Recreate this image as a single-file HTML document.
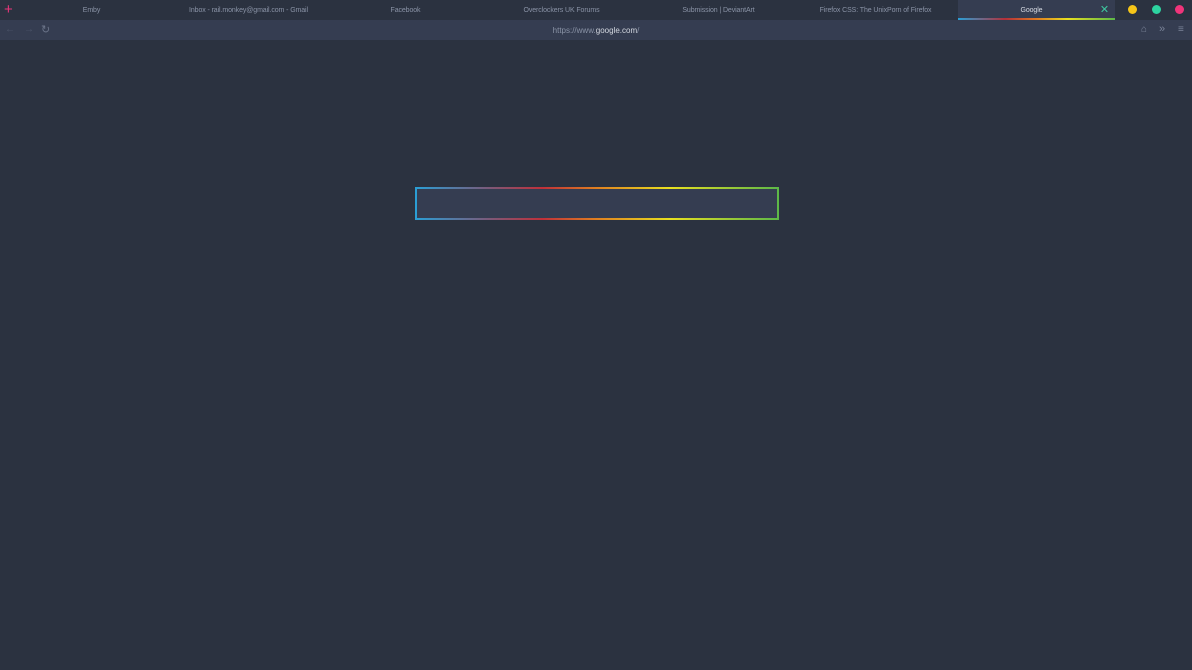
<!DOCTYPE html>
<html><head><meta charset="utf-8"><style>
*{margin:0;padding:0;box-sizing:border-box}
body{width:1192px;height:670px;background:#2b3240;font-family:"Liberation Sans",sans-serif;overflow:hidden;position:relative}
#tabs{position:absolute;left:0;top:0;width:1192px;height:20px;background:#2b3240}
.tab{position:absolute;top:0;height:20px;width:157px;color:#8a93a6;font-size:7px;text-align:center;line-height:22px;padding-right:10px;letter-spacing:-0.1px}
.tab.active{background:#353d51;color:#d4d8e0}
.tab.active:after{content:"";position:absolute;left:0;right:0;bottom:0;height:2px;background:linear-gradient(90deg,#2a9fd6,#b3303a 30%,#e07a20 50%,#e8e020 70%,#5cb848)}
#nav{position:absolute;left:0;top:20px;width:1192px;height:20px;background:#353d51}
.url{position:absolute;left:0;width:1192px;top:0;line-height:21px;text-align:center;font-size:8px;color:#8a93a6}
.url b{font-weight:normal;color:#d4d8e0}
.dot{position:absolute;top:5px;width:9px;height:9px;border-radius:50%}
#box{position:absolute;left:415px;top:187px;width:364px;height:33px;background:linear-gradient(90deg,#2a9fd6,#7a5a7a 20%,#c0303a 35%,#e08020 50%,#e8e020 70%,#5cb848)}
#box div{position:absolute;left:2px;top:2px;right:2px;bottom:2px;background:#353d51}
</style></head><body>
<div id="tabs">
<div style="position:absolute;left:4px;top:2px;color:#e8357a;font-size:15px;line-height:16px">+</div>
<div class="tab" style="left:18px">Emby</div>
<div class="tab" style="left:175px">Inbox - rail.monkey@gmail.com - Gmail</div>
<div class="tab" style="left:332px">Facebook</div>
<div class="tab" style="left:488px">Overclockers UK Forums</div>
<div class="tab" style="left:645px">Submission | DeviantArt</div>
<div class="tab" style="left:802px">Firefox CSS: The UnixPorn of Firefox</div>
<div class="tab active" style="left:958px">Google<span style="position:absolute;right:6px;top:-1px;color:#3ec7a0;font-size:11px">✕</span></div>
<div class="dot" style="left:1128px;background:#f5c518"></div>
<div class="dot" style="left:1152px;background:#2dd4a0"></div>
<div class="dot" style="left:1175px;background:#f0347a"></div>
</div>
<div id="nav">
<div style="position:absolute;left:5px;top:4px;color:#4b5468;font-size:10px">←</div>
<div style="position:absolute;left:24px;top:4px;color:#4b5468;font-size:10px">→</div>
<div style="position:absolute;left:41px;top:3px;color:#6a7388;font-size:11px">↻</div>
<div class="url">https://www.<b>google.com</b>/</div>
<div style="position:absolute;left:1141px;top:4px;color:#7a8398;font-size:10px">⌂</div>
<div style="position:absolute;left:1159px;top:3px;color:#7a8398;font-size:11px">»</div>
<div style="position:absolute;left:1178px;top:4px;color:#7a8398;font-size:10px">≡</div>
</div>
<div id="box"><div></div></div>
</body></html>
